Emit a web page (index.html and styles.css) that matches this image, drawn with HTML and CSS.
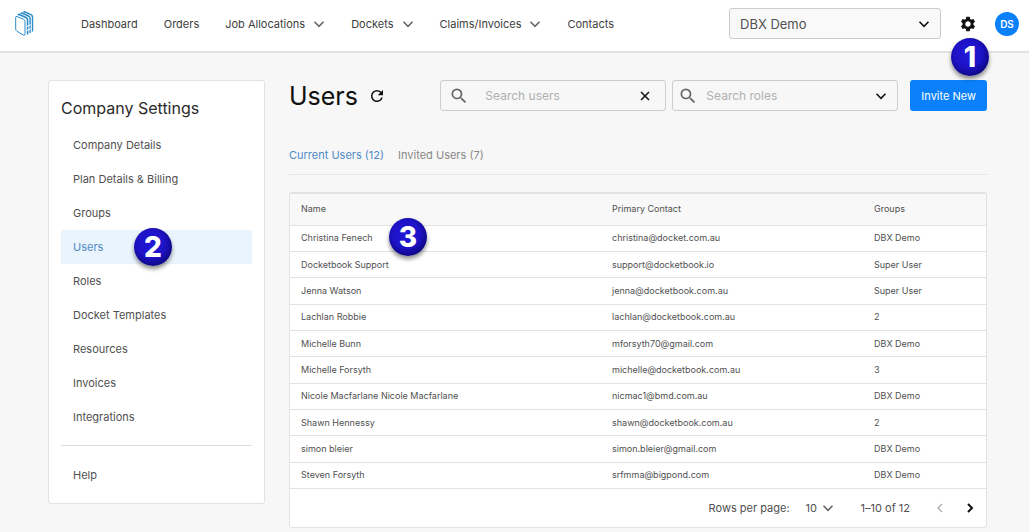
FILE: index.html
```html
<!DOCTYPE html>
<html lang="en">
<head>
<meta charset="utf-8">
<meta name="viewport" content="width=device-width, initial-scale=1">
<title>Users</title>
<link rel="stylesheet" href="styles.css">
</head>
<body>
<svg class="defs" aria-hidden="true">
  <symbol id="chevron" viewBox="0 0 12 12"><path d="M1.500 3.800 6 8.300l4.500-4.500" fill="none" stroke="currentColor" stroke-width="1.600"/></symbol>
  <symbol id="search" viewBox="0 0 24 24"><path fill="currentColor" d="M15.500 14h-.79l-.28-.27A6.470 6.470 0 0 0 16 9.500 6.500 6.500 0 1 0 9.500 16c1.610 0 3.090-.59 4.230-1.570l.27.28v.79l5 4.990L20.490 19l-4.990-5zm-6 0C7.010 14 5 11.990 5 9.500S7.010 5 9.500 5 14 7.010 14 9.500 11.990 14 9.500 14z"/></symbol>
</svg>
<header class="topbar">
  <a class="logo" href="#" aria-label="Home">
    <svg viewBox="0 0 20 26" width="20" height="26" fill="none" stroke="#2b8bcb">
      <path d="M1.700 6.500 Q1.700 5 3 5.500 L9.500 8.300 Q11 9 11 10.500 V22.500 Q11 25 9.300 24 L3 20.300 Q1.700 19.500 1.700 18 Z" stroke-width="1"/>
      <path d="M3.700 3.800 L5 3.400 L12 6.500 Q13.600 7.300 13.600 9 V23.500" stroke-width="1.600"/>
      <path d="M6.500 2.400 L8 2 L14.500 5 Q16.100 5.800 16.100 7.500 V22" stroke-width="1.400"/>
      <path d="M9.300 1.200 L10.500 .8 L17 3.600 Q18.500 4.400 18.500 6 V20.500" stroke-width="1.400"/>
      <path d="M12.500 15.500l4.500-1.700M12.500 19.500l4.500-1.700" stroke="#fff" stroke-width="1"/>
    </svg>
  </a>
  <nav class="mainnav" aria-label="Main">
    <a href="#">Dashboard</a>
    <a href="#">Orders</a>
    <button type="button">Job Allocations <svg class="chev"><use href="#chevron"/></svg></button>
    <button type="button">Dockets <svg class="chev"><use href="#chevron"/></svg></button>
    <button type="button">Claims/Invoices <svg class="chev"><use href="#chevron"/></svg></button>
    <a href="#">Contacts</a>
  </nav>
  <div class="field company">
    <select aria-label="Company"><option>DBX Demo</option></select>
    <svg class="chev dark"><use href="#chevron"/></svg>
  </div>
  <button class="gear" type="button" aria-label="Settings">
    <svg viewBox="0 0 24 24" width="18" height="18"><path fill="#111" d="M19.140 12.940c.04-.3.06-.61.06-.94 0-.32-.02-.64-.07-.94l2.030-1.580a.49.49 0 0 0 .12-.61l-1.920-3.320a.488.488 0 0 0-.59-.22l-2.390.96c-.5-.38-1.030-.7-1.620-.94l-.36-2.540a.484.484 0 0 0-.48-.41h-3.840c-.24 0-.43.17-.47.41l-.36 2.540c-.59.24-1.130.57-1.620.94l-2.390-.96c-.22-.08-.47 0-.59.22L2.740 8.870c-.12.21-.08.47.12.61l2.030 1.580c-.05.3-.09.63-.09.94s.02.64.07.94l-2.030 1.580a.49.49 0 0 0-.12.61l1.920 3.320c.12.22.37.29.59.22l2.390-.96c.5.38 1.030.7 1.620.94l.36 2.540c.05.24.24.41.48.41h3.840c.24 0 .44-.17.47-.41l.36-2.540c.59-.24 1.130-.56 1.620-.94l2.390.96c.22.08.47 0 .59-.22l1.920-3.320c.12-.22.07-.47-.12-.61l-2.010-1.580zM12 15.600A3.610 3.610 0 0 1 8.400 12c0-1.980 1.620-3.600 3.600-3.600s3.600 1.620 3.600 3.600-1.620 3.600-3.600 3.600z"/></svg>
    <span class="step step-below">1</span>
  </button>
  <button class="avatar" type="button" aria-label="Account">DS</button>
</header>

<div class="page">
  <aside class="sidebar">
    <h2>Company Settings</h2>
    <nav class="sidenav" aria-label="Company settings">
      <a href="#">Company Details</a>
      <a href="#">Plan Details &amp; Billing</a>
      <a href="#">Groups</a>
      <a href="#" class="active" aria-current="page">Users<span class="step step-users">2</span></a>
      <a href="#">Roles</a>
      <a href="#">Docket Templates</a>
      <a href="#">Resources</a>
      <a href="#">Invoices</a>
      <a href="#">Integrations</a>
      <hr>
      <a href="#">Help</a>
    </nav>
  </aside>

  <main>
    <div class="titlebar">
      <h1>Users</h1>
      <button class="refresh" type="button" aria-label="Refresh">
        <svg viewBox="0 0 24 24" width="18" height="18"><path fill="#111" d="M17.650 6.350A7.958 7.958 0 0 0 12 4a8 8 0 1 0 7.730 10h-2.080A5.990 5.990 0 0 1 12 18c-3.310 0-6-2.690-6-6s2.690-6 6-6c1.660 0 3.140.69 4.220 1.780L13 11h7V4l-2.350 2.350z"/></svg>
      </button>
      <div class="filters">
        <div class="field wide-icon">
          <svg class="glass"><use href="#search"/></svg>
          <input type="text" placeholder="Search users" aria-label="Search users">
          <button class="clear" type="button" aria-label="Clear"><svg viewBox="0 0 12 12" width="12" height="12"><path d="m2 2 8 8M10 2l-8 8" stroke="#111" stroke-width="1.500"/></svg></button>
        </div>
        <div class="field">
          <svg class="glass"><use href="#search"/></svg>
          <input type="text" placeholder="Search roles" aria-label="Search roles">
          <svg class="chev dark"><use href="#chevron"/></svg>
        </div>
      </div>
      <button class="invite" type="button">Invite New</button>
    </div>

    <nav class="tabs" aria-label="User lists">
      <a href="#" class="active">Current Users (12)</a>
      <a href="#">Invited Users (7)</a>
    </nav>

    <section class="card">
      <table>
        <colgroup><col class="c-name"><col class="c-contact"><col></colgroup>
        <thead><tr><th>Name</th><th>Primary Contact</th><th>Groups</th></tr></thead>
        <tbody>
          <tr><td><span class="anchor">Christina Fenech<span class="step step-row">3</span></span></td><td>christina@docket.com.au</td><td>DBX Demo</td></tr>
          <tr><td>Docketbook Support</td><td>support@docketbook.io</td><td>Super User</td></tr>
          <tr><td>Jenna Watson</td><td>jenna@docketbook.com.au</td><td>Super User</td></tr>
          <tr><td>Lachlan Robbie</td><td>lachlan@docketbook.com.au</td><td>2</td></tr>
          <tr><td>Michelle Bunn</td><td>mforsyth70@gmail.com</td><td>DBX Demo</td></tr>
          <tr><td>Michelle Forsyth</td><td>michelle@docketbook.com.au</td><td>3</td></tr>
          <tr><td>Nicole Macfarlane Nicole Macfarlane</td><td>nicmac1@bmd.com.au</td><td>DBX Demo</td></tr>
          <tr><td>Shawn Hennessy</td><td>shawn@docketbook.com.au</td><td>2</td></tr>
          <tr><td>simon bleier</td><td>simon.bleier@gmail.com</td><td>DBX Demo</td></tr>
          <tr><td>Steven Forsyth</td><td>srfmma@bigpond.com</td><td>DBX Demo</td></tr>
        </tbody>
      </table>
      <div class="pager">
        <label for="rows">Rows per page:</label>
        <div class="rows">
          <select id="rows"><option>10</option></select>
          <svg class="chev"><use href="#chevron"/></svg>
        </div>
        <span class="range">1–10 of 12</span>
        <button type="button" class="prev" aria-label="Previous page" disabled><svg viewBox="0 0 12 12" width="12" height="12"><path d="M8 2 4 6l4 4" fill="none" stroke="currentColor" stroke-width="1.300"/></svg></button>
        <button type="button" class="next" aria-label="Next page"><svg viewBox="0 0 12 12" width="12" height="12"><path d="m4 2 4 4-4 4" fill="none" stroke="currentColor" stroke-width="2"/></svg></button>
      </div>
    </section>
  </main>
</div>
</body>
</html>
```
FILE: styles.css
```css
* { box-sizing: border-box; }
body {
  margin: 0;
  background: #f7f7f7;
  color: #505050;
  font: 11px/14px Inter, "Liberation Sans", sans-serif;
}
a { color: inherit; text-decoration: none; }
button, input, select { font: inherit; color: inherit; border: 0; padding: 0; margin: 0; background: none; }
h1, h2 { margin: 0; font-weight: 400; }
svg { display: block; flex: none; }
.defs { position: absolute; width: 0; height: 0; }
.chev { width: 12px; height: 12px; color: #666; pointer-events: none; }
.chev.dark { color: #111; }

/* Top bar */
.topbar {
  display: flex;
  align-items: center;
  height: 53px;
  padding: 0 10px 4px 14px;
  background: #fff;
  border-bottom: 2px solid #e2e2e2;
}
.mainnav { display: flex; gap: 26px; margin-left: 47px; color: #404040; }
.mainnav button { display: flex; align-items: center; gap: 8px; }
.company { width: 212px; margin-left: auto; background: #f9f9f9; font-size: 13px; }
.gear { position: relative; margin: 0 18px; }
.avatar {
  width: 24px;
  height: 24px;
  border-radius: 50%;
  background: #0a80fb;
  color: #fff;
  font-size: 10px;
  font-weight: 600;
}

/* Boxed inputs */
.field {
  display: flex;
  align-items: center;
  height: 31px;
  padding: 0 10px;
  border: 1px solid #ccc;
  border-radius: 3px;
}
.field input, .field select { flex: 1; min-width: 0; height: 100%; appearance: none; outline: 0; }
.field input::placeholder { color: #b0b0b0; opacity: 1; }
.glass { width: 20px; height: 20px; color: #666; }

/* Numbered step markers */
.step {
  position: absolute;
  z-index: 1;
  width: 38px;
  height: 38px;
  border-radius: 50%;
  background: radial-gradient(circle at 45% 42%, #2219d8 0, #1d12c6 45%, #0d0680 75%, #04023c 100%);
  box-shadow: 0 3px 4px rgba(0, 0, 0, .45);
  color: #fff;
  font-size: 28px;
  font-weight: 800;
  line-height: 38px;
  text-align: center;
}
.step-below { top: 23px; left: -8px; }
.step-users { top: -2px; left: 73px; }
.step-row { top: -14px; left: 88px; }

/* Page */
.page {
  display: grid;
  grid-template-columns: 217px minmax(0, 1fr);
  gap: 24px;
  align-items: start;
  padding: 27px 42px 4px 48px;
}
.sidebar {
  padding: 16px 12px 11px;
  background: #fff;
  border: 1px solid #e2e2e2;
  border-radius: 3px;
}
.sidebar h2 { font-size: 16px; line-height: 22px; color: #2a2a2a; }
.sidenav { display: flex; flex-direction: column; margin-top: 9px; }
.sidenav a { position: relative; padding: 10px 12px; }
.sidenav .active { background: #eaf4fd; color: #4f8ac6; }
.sidenav hr { width: 100%; margin: 11px 0 12px; border: 0; border-top: 1px solid #ddd; }

/* Title row */
.titlebar { display: flex; align-items: center; height: 31px; }
h1 { font-size: 25px; line-height: 30px; color: #111; }
.refresh { margin-left: 10px; }
.filters { display: grid; grid-template-columns: 226px 226px; gap: 6px; margin-left: auto; font-size: 12px; }
.wide-icon { padding: 0 14px 0 8px; }
.filters .field:last-child { padding-left: 5px; }
.glass + input { margin-left: 8px; }
.wide-icon .glass + input { margin-left: 16px; }
.invite {
  height: 31px;
  margin-left: 12px;
  padding: 0 11px;
  border-radius: 3px;
  background: #0a80fb;
  color: #fff;
}

.tabs {
  display: flex;
  gap: 14px;
  margin-top: 37px;
  padding-bottom: 12px;
  border-bottom: 1px solid #e5e5e5;
  color: #888;
}
.tabs .active { color: #4f8ac6; }

/* Users table */
.card {
  margin-top: 17px;
  background: #fff;
  border: 1px solid #e2e2e2;
  border-top-width: 2px;
  border-radius: 3px;
}
table { width: 100%; height: 295px; table-layout: fixed; border-collapse: collapse; font-size: 9px; }
.c-name { width: 311px; }
.c-contact { width: 262px; }
th, td { padding: 0 11px; border-bottom: 1px solid #e2e2e2; text-align: left; font-weight: 400; }
th { height: 31px; background: #f8f8f8; }
td { height: 26px; }
.anchor { position: relative; }

.pager { display: flex; align-items: center; justify-content: flex-end; height: 38px; padding: 0 10px; }
.rows { display: flex; align-items: center; gap: 4px; margin: 0 27px 0 16px; }
.rows select { appearance: none; }
.prev { margin: 0 18px 0 24px; color: #aaa; }
.next { color: #111; }
```
